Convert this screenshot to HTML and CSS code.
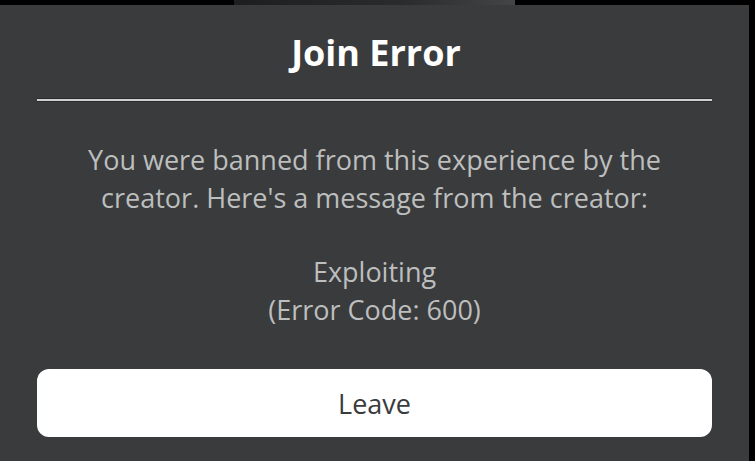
FILE: index.html
```html
<!DOCTYPE html>
<html>
<head>
<meta charset="utf-8">
<link rel="stylesheet" href="styles.css">
</head>
<body>
<div class="screen">
  <div class="topbar"><div class="topbar-tab"></div></div>
  <div class="row">
    <div class="dialog">
      <h1 class="title">Join Error</h1>
      <div class="divider"></div>
      <div class="message">
        <p class="msg">You were banned from this experience by the creator. Here's a message from the creator:</p>
        <p class="msg reason">Exploiting<br>(Error Code: 600)</p>
      </div>
      <button class="leave">Leave</button>
    </div>
    <div class="edge"></div>
  </div>
</div>
</body>
</html>
```
FILE: styles.css
```css
html, body {
  margin: 0;
  padding: 0;
  background: #000;
  width: 755px;
  height: 461px;
  overflow: hidden;
}
.screen {
  display: flex;
  flex-direction: column;
  width: 755px;
  height: 461px;
}
.topbar {
  height: 5px;
  background: #000;
  display: flex;
  padding-left: 234px;
}
.topbar-tab {
  width: 281px;
  height: 5px;
  background: linear-gradient(90deg, #1e1e1f 0%, #2a2b2c 60%, #444546 100%);
}
.row {
  flex: 1;
  display: flex;
}
.dialog {
  width: 749px;
  background: #393b3d;
  display: flex;
  flex-direction: column;
  padding: 0 37px 24px;
  box-sizing: border-box;
  font-family: "Open Sans", sans-serif;
}
.edge {
  flex: 1;
  background: #000;
}
.title {
  margin: 0;
  height: 94px;
  padding-left: 3px;
  display: flex;
  align-items: center;
  justify-content: center;
  color: #fff;
  font-size: 36px;
  font-weight: 700;
}
.divider {
  height: 2px;
  background: #cfcfcf;
  box-shadow: 0 1px 0 #2a2b2c, 0 -1px 0 #2a2b2c;
}
.message {
  flex: 1;
  color: #bdbebe;
  font-size: 27px;
  line-height: 38px;
  text-align: center;
  padding: 40px 20px 0;
}
.msg {
  margin: 0;
}
.reason {
  margin-top: 36px;
}
.leave {
  height: 68px;
  border: none;
  border-radius: 12px;
  background: #fff;
  color: #393b3d;
  font-family: "Open Sans", sans-serif;
  font-size: 27px;
  padding: 0;
}
```
